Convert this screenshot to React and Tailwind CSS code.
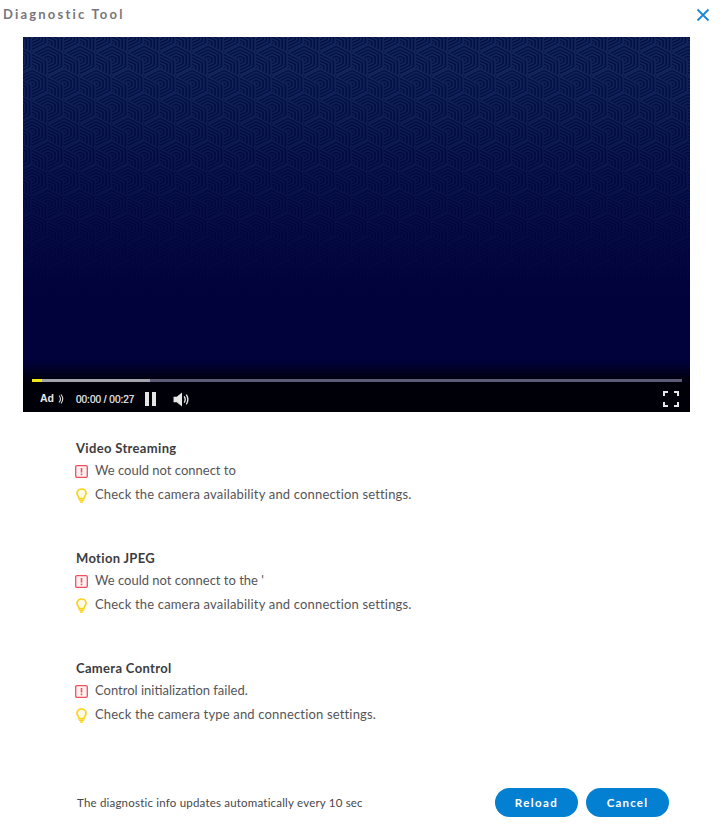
import React from "react";

const W = 32, H = 48, RH = 24;
function chevrons() {
  const out = [];
  const nodes = [];
  for (let j = -1; j <= 3; j++) {
    for (let i = -2; i <= 3; i++) {
      nodes.push([i * W + (j % 2 ? W / 2 : 0), j * RH]);
    }
  }
  const cen = (p, q, r) => [(p[0] + q[0] + r[0]) / 3, (p[1] + q[1] + r[1]) / 3];
  const add = (c1, A, B) => {
    const a = [A[0] - c1[0], A[1] - c1[1]];
    const b = [B[0] - c1[0], B[1] - c1[1]];
    for (let k = 0; k < 5; k++) {
      const t = k / 5 + 0.06;
      const P = (u, v) => `${(c1[0] + u * a[0] + v * b[0]).toFixed(2)} ${(c1[1] + u * a[1] + v * b[1]).toFixed(2)}`;
      out.push(`M${P(1, t)}L${P(t, t)}L${P(t, 1)}`);
    }
  };
  for (const n of nodes) {
    const r = [n[0] + W, n[1]];
    const dr = [n[0] + W / 2, n[1] + RH];
    const ur = [n[0] + W / 2, n[1] - RH];
    const dl = [n[0] - W / 2, n[1] + RH];
    add(cen(n, r, ur), n, r);
    add(cen(n, dr, r), n, dr);
    add(cen(n, dl, dr), dl, n);
  }
  return out.join("");
}
const PATH = chevrons();

function Pattern() {
  return (
    <svg className="absolute inset-0 w-full h-full" aria-hidden="true">
      <defs>
        <pattern id="hex" x="-7" y="-9" width={W} height={H} patternUnits="userSpaceOnUse">
          <rect width={W} height={H} fill="#04103f" />
          <path d={PATH} fill="none" stroke="#11265f" strokeWidth="1.5" />
        </pattern>
      </defs>
      <rect width="100%" height="100%" fill="url(#hex)" />
    </svg>
  );
}

function ErrorIcon() {
  return (
    <svg width="13" height="13" viewBox="0 0 13 13" className="ml-[-1px] shrink-0">
      <rect x="0.7" y="0.7" width="11.6" height="11.6" rx="1.2" fill="#fff2f2" stroke="#f0505a" strokeWidth="1.3" />
      <rect x="5.700" y="3" width="1.600" height="4.600" fill="#f0505a" />
      <rect x="5.700" y="8.600" width="1.600" height="1.600" fill="#f0505a" />
    </svg>
  );
}

function BulbIcon() {
  return (
    <svg width="12" height="15" viewBox="0 0 12 15" className="shrink-0">
      <path d="M5.500 1C3 1 1 2.800 1 5.200c0 2.200 1.800 3 2.100 5.400h4.800C8.200 8.200 10 7.400 10 5.200 10 2.800 8 1 5.500 1Z" fill="#fffbe6" stroke="#fbd21e" strokeWidth="1.700" />
      <path d="M3.500 12.300h4M4.500 14h2" stroke="#fbd21e" strokeWidth="1.400" strokeLinecap="round" />
    </svg>
  );
}

function Section({ title, error, tip }) {
  return (
    <section className="h-[110px] pl-[76px]">
      <h2 className="h-[18px] leading-[18px] text-[13px] font-bold tracking-[0.33px] text-[#3c3c3f]">{title}</h2>
      <div className="mt-[5px] flex h-[18px] items-center gap-[7px] text-[13px] text-[#555558]">
        <ErrorIcon />
        <span>{error}</span>
      </div>
      <div className="mt-[6px] flex h-[18px] items-center gap-[7px] text-[13px] tracking-[0.17px] text-[#555558]">
        <BulbIcon />
        <span>{tip}</span>
      </div>
    </section>
  );
}

export default function App() {
  return (
    <div className="w-[722px] h-[831px] bg-white font-['Lato','Open_Sans',sans-serif] overflow-hidden">
      <header className="flex h-[37px] items-start justify-between pl-[3px] pr-[12px]">
        <h1 className="mt-[5px] text-[13px] leading-[18px] font-bold tracking-[2.2px] text-[#77777a]">Diagnostic Tool</h1>
        <svg width="14" height="14" viewBox="0 0 14 14" className="mt-[8px]">
          <path d="M1.500 1.500 12.500 12.500M12.500 1.500 1.500 12.500" stroke="#1a87d6" strokeWidth="1.800" fill="none" />
        </svg>
      </header>

      <div className="relative ml-[23px] h-[375px] w-[667px] overflow-hidden bg-[#01013c]">
        <Pattern />
        <div className="absolute inset-0 bg-gradient-to-b from-transparent from-[8%] to-[#01013c] to-[70%]" />
        <div className="absolute inset-x-0 bottom-0 h-[52px] bg-gradient-to-b from-transparent to-[#000008] to-[45%]" />
        <div className="absolute inset-x-0 bottom-0 h-[33px] px-[9px]">
          <div className="absolute left-[9px] right-[8px] top-0 flex h-[3px] bg-[#5b5b78]">
            <div className="h-full w-[10px] bg-[#f0e81d]" />
            <div className="h-full w-[108px] bg-[#a3a3ad]" />
          </div>
          <div className="flex h-full items-center pl-[8px] pr-[2px] pt-[7px] text-white">
            <span className="font-['Liberation_Sans',sans-serif] text-[10.500px] font-bold text-[#e8e8e8]">Ad</span>
            <svg width="6" height="10" viewBox="0 0 6 10" className="ml-[4px]">
              <path d="M1 1.500Q4 5 1 8.500M3 0.500Q6.500 5 3 9.500" stroke="#ddd" strokeWidth="1.100" fill="none" />
            </svg>
            <span className="ml-[12px] font-['Liberation_Sans',sans-serif] text-[10px] font-normal text-[#f0f0f0] [-webkit-text-stroke:0.2px_#f0f0f0]">00:00 / 00:27</span>
            <div className="ml-[11px] flex gap-[3px]">
              <span className="h-[14px] w-[4px] bg-[#e6e6e6]" />
              <span className="h-[14px] w-[4px] bg-[#e6e6e6]" />
            </div>
            <svg width="17" height="17" viewBox="0 0 16 16" className="ml-[17px]">
              <path d="M0.500 5.500H3.500L8.500 1.500V14.500L3.500 10.500H0.500Z" fill="#e6e6e6" />
              <path d="M10.500 5Q12.500 8 10.500 11M12.500 3.500Q15.500 8 12.500 12.500" stroke="#e6e6e6" strokeWidth="1.300" fill="none" />
            </svg>
            <svg width="16" height="16" viewBox="0 0 16 16" className="ml-auto">
              <path d="M1 5V1H5M11 1H15V5M15 11V15H11M5 15H1V11" stroke="#e6e6e6" strokeWidth="2" fill="none" />
            </svg>
          </div>
        </div>
      </div>

      <main className="pt-[27px]">
        <Section title="Video Streaming" error="We could not connect to" tip="Check the camera availability and connection settings." />
        <Section title="Motion JPEG" error="We could not connect to the '" tip="Check the camera availability and connection settings." />
        <Section title="Camera Control" error="Control initialization failed." tip="Check the camera type and connection settings." />
      </main>

      <footer className="mt-[19px] flex items-center pl-[77px] pr-[53px]">
        <span className="text-[11.500px] tracking-[0.2px] text-[#47474a]">The diagnostic info updates automatically every 10 sec</span>
        <button className="ml-auto h-[29px] w-[83px] rounded-full bg-[#0480d2] text-[11.500px] font-bold tracking-[1.4px] text-white">Reload</button>
        <button className="ml-[8px] h-[29px] w-[83px] rounded-full bg-[#0480d2] text-[11.500px] font-bold tracking-[1.2px] text-white">Cancel</button>
      </footer>
    </div>
  );
}
